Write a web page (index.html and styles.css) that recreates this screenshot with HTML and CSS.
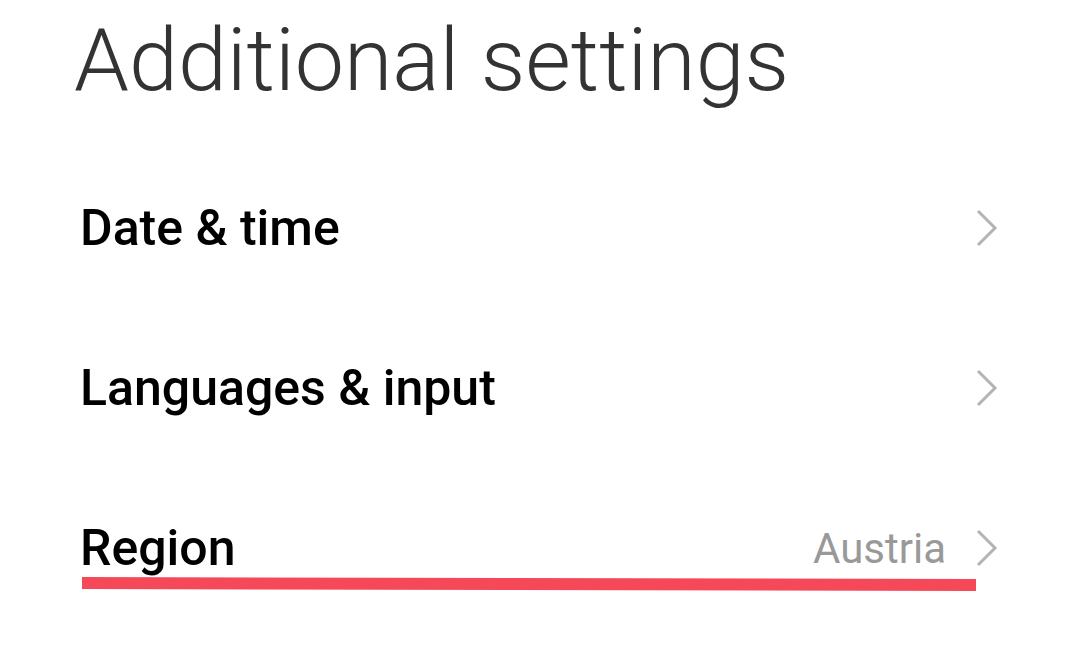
FILE: index.html
```html
<!DOCTYPE html>
<html lang="en">
<head>
    <meta charset="UTF-8">
    <meta name="viewport" content="width=device-width, initial-scale=1.0">
    <title>Additional settings</title>
    <link rel="stylesheet" href="styles.css">
</head>
<body>
    <div class="screen">
        <h1 class="title">Additional settings</h1>
        <ul class="settings">
            <li class="row">
                <span class="label">Date &amp; time</span>
                <span class="chevron">
                    <svg width="22" height="38" viewBox="0 0 22 38"><path d="M2 2 L19 19 L2 36" fill="none" stroke="#b3b3b3" stroke-width="3"/></svg>
                </span>
            </li>
            <li class="row">
                <span class="label">Languages &amp; input</span>
                <span class="chevron">
                    <svg width="22" height="38" viewBox="0 0 22 38"><path d="M2 2 L19 19 L2 36" fill="none" stroke="#b3b3b3" stroke-width="3"/></svg>
                </span>
            </li>
            <li class="row marked">
                <span class="label">Region</span>
                <span class="value">Austria</span>
                <span class="chevron">
                    <svg width="22" height="38" viewBox="0 0 22 38"><path d="M2 2 L19 19 L2 36" fill="none" stroke="#b3b3b3" stroke-width="3"/></svg>
                </span>
            </li>
        </ul>
    </div>
</body>
</html>
```

FILE: styles.css
```css
body {
    margin: 0;
    background: #ffffff;
    font-family: Roboto, "Liberation Sans", sans-serif;
}
.screen {
    width: 1080px;
    height: 647px;
    overflow: hidden;
}
.title {
    margin: 0;
    padding: 10px 0 0 74px;
    font-size: 88px;
    font-weight: 300;
    line-height: 100px;
    color: #333333;
}
.settings {
    list-style: none;
    margin: 0;
    padding: 38px 82px 0 80px;
}
.row {
    position: relative;
    display: flex;
    align-items: center;
    height: 160px;
}
.label {
    flex: 1;
    font-size: 50px;
    font-weight: 500;
    color: #000000;
}
.value {
    font-size: 42px;
    color: #999999;
    margin-right: 30px;
}
.chevron {
    display: flex;
}
/* red highlight under the chosen row */
.marked::after {
    content: "";
    position: absolute;
    left: 2px;
    right: 22px;
    top: 110px;
    height: 12px;
    background: #f5495a;
    transform: rotate(0.12deg);
}
```
